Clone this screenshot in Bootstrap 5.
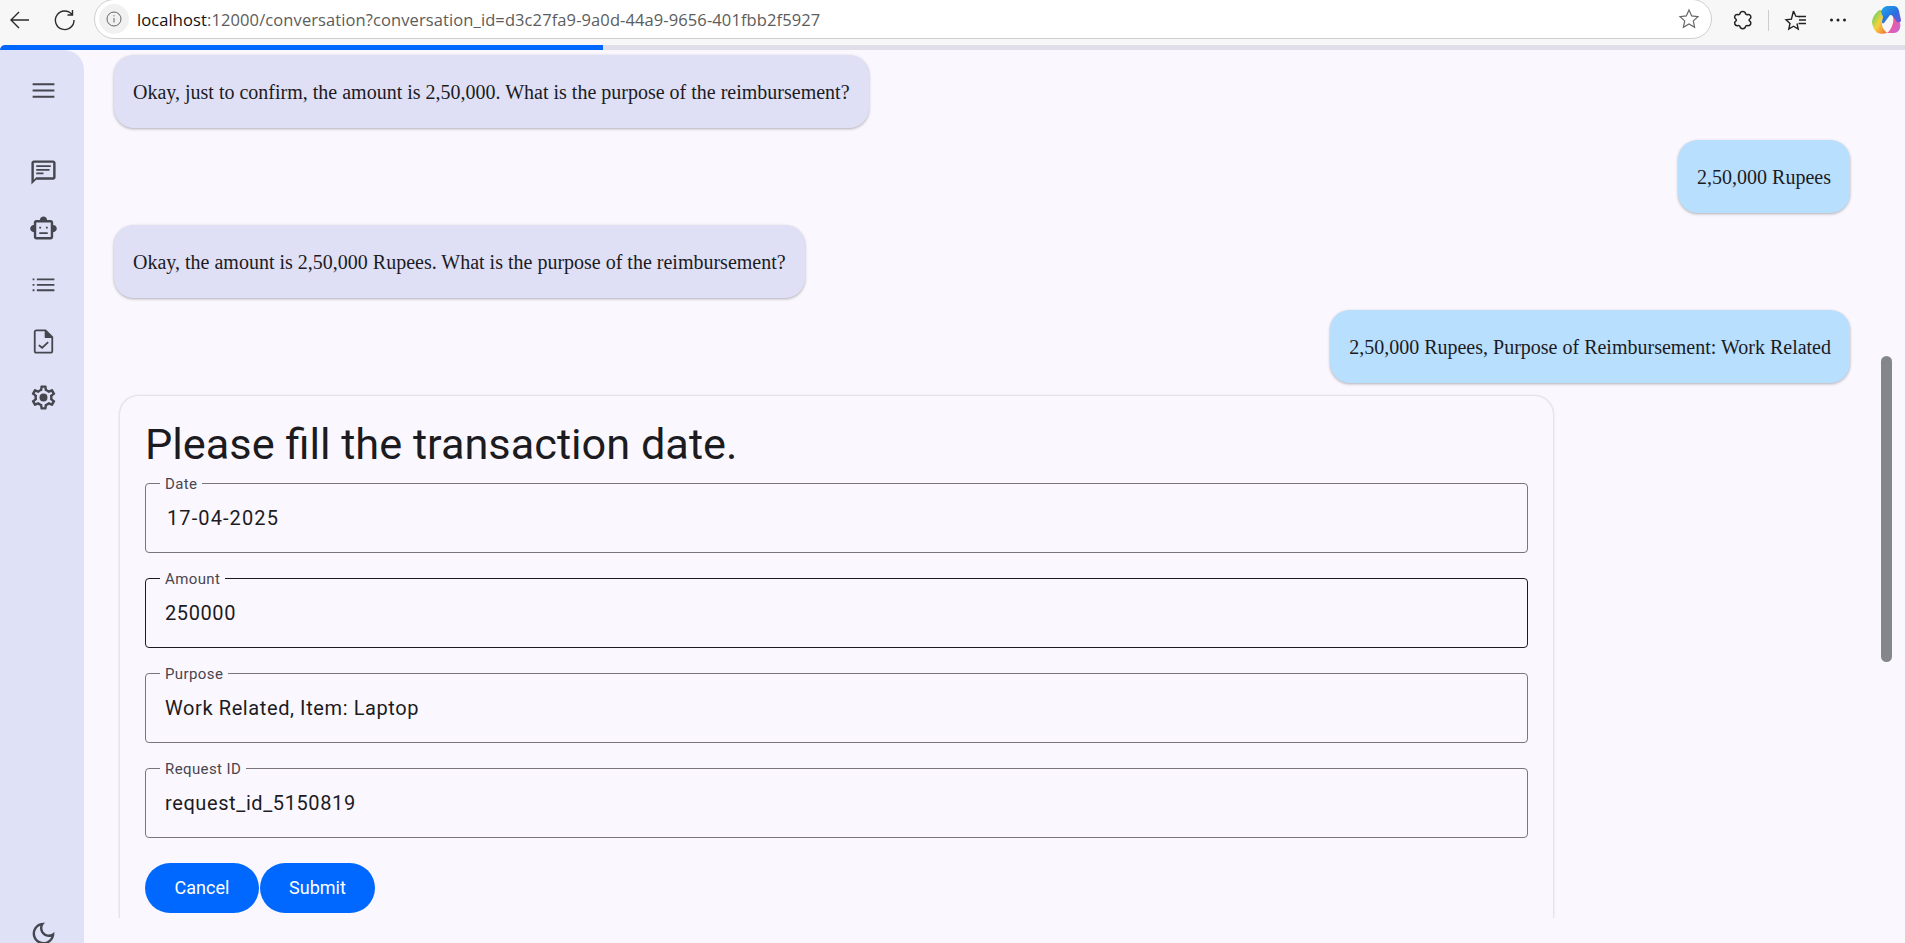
<!doctype html>
<html lang="en">
<head>
<meta charset="utf-8">
<title>Conversation</title>
<link href="https://cdn.jsdelivr.net/npm/bootstrap@5.3.0/dist/css/bootstrap.min.css" rel="stylesheet">
<style>
html,body{height:943px;overflow:hidden}
body{background:#faf8fe;font-family:Roboto,sans-serif;color:#1c1b1f}
.chrome-bar{height:45px;background:#f7f7f7}
.nav-ico{height:40px;color:#2b2b2b}
.slot-back{width:40px}
.slot-reload{width:50px}
.addr{width:1618px;height:40px;margin-top:-1px;background:#fff;border:1px solid #cfcfcf;border-radius:20px}
.addr-info{width:30px;height:30px;margin-left:4px;background:#f1f1f1;border-radius:50%;color:#666}
.addr-text{font:16.5px "Open Sans",sans-serif;color:#5c5c5c;margin-left:8px;letter-spacing:.1px;white-space:nowrap}
.addr-text b{font-weight:400;color:#111}
.addr-star{margin-right:11px}
.tools{height:40px}
.tool-puzzle{margin-left:20px}
.tool-sep{width:1px;height:21px;background:#cdcdcd;margin-left:14px}
.tool-fav{margin-left:15px}
.tool-dots{margin-left:21px}
.tool-copilot{margin-left:25px}
.progress-track{height:5px;background:#e0dfe9;border-top-left-radius:5px}
.progress-fill{width:603px;background:#0068ff;border-top-left-radius:5px}
.app-body{height:893px}
.rail{width:84px;background:#dfe1f7;border-top-right-radius:20px;color:#46464f;padding-left:3px}
.rail-ico{width:29px;height:29px;display:block;fill:currentColor}
.rail-slot{height:56.4px}
.rail-head{height:80px;margin-bottom:14px}
.rail-foot{height:24px}
.chat-pane{height:868px;padding:5px 0 0 30px}
.bubble{font:20px/23px "Liberation Serif",serif;color:#1c1b1f;padding:26px 19px 24px;border-radius:20px;box-shadow:0 1px 3px rgba(0,0,0,.3);margin-bottom:12px;width:max-content;height:73px}
.bub-agent{background:#dfe0f6}
.bub-user{background:#b8dffe;margin-left:auto}
.bubbles{width:1736px}
.form-panel{width:1435px;margin:12px 0 0 5px;background:#faf8fe;border:1px solid #e6e3ea;border-radius:20px;padding:23px 25px 30px 25px;box-shadow:0 0 2px rgba(0,0,0,.12)}
.form-heading{font:400 43.3px/52px Roboto,sans-serif;color:#1c1b1f;margin:0 0 12px}
.field-box{position:relative;height:70px;margin-bottom:25px;border:1px solid #79747e;border-radius:4px}
.field-box.focused{border-color:#1c1b1f}
.field-label{position:absolute;top:-8px;left:14px;padding:0 5px;background:#faf8fe;font:15px/16px Roboto,sans-serif;letter-spacing:.4px;color:#49454f}
.field-value{font:20px/68px Roboto,sans-serif;letter-spacing:.6px;padding-left:19px;color:#1c1b1f}
.field-value.date-val{padding-left:21px;letter-spacing:1.1px}
.btn-row{gap:1px}
.pill-btn{height:50px;width:115px;padding:0 0 2px;border-radius:25px;background:#0068ff;border:0;color:#fff;font:400 18px Roboto,sans-serif}
.pill-btn:first-child{width:114px}
.thumb{position:absolute;left:1881px;top:356px;width:11px;height:306px;border-radius:6px;background:#83878b}
</style>
</head>
<body class="d-flex flex-column">
<header class="chrome-bar d-flex align-items-start">
  <div class="d-flex align-items-center justify-content-center nav-ico slot-back">
    <svg width="22" height="22" viewBox="0 0 22 22" fill="none" stroke="currentColor" stroke-width="1.4"><path d="M20 11H2M10 3l-8 8 8 8"/></svg>
  </div>
  <div class="d-flex align-items-center justify-content-center nav-ico slot-reload">
    <svg width="24" height="24" viewBox="0 0 24 24" fill="none" stroke="currentColor" stroke-width="1.4"><path d="M19 6.5A9.3 9.3 0 1 0 21 12M19.5 2v5h-5"/></svg>
  </div>
  <div class="addr d-flex align-items-center ms-1">
    <div class="addr-info d-flex align-items-center justify-content-center">
      <svg width="16" height="16" viewBox="0 0 16 16" fill="none" stroke="currentColor"><circle cx="8" cy="8" r="7"/><path d="M8 7v4.500M8 4.200v1.200"/></svg>
    </div>
    <div class="addr-text flex-grow-1"><b>localhost</b>:12000/conversation?conversation_id=d3c27fa9-9a0d-44a9-9656-401fbb2f5927</div>
    <svg class="addr-star" width="22" height="22" viewBox="0 0 22 22" fill="none" stroke="#666" stroke-width="1.2"><path d="M11 2l2.700 5.900 6.300.7-4.700 4.300 1.300 6.300-5.600-3.200-5.600 3.200 1.300-6.300L2 8.600l6.300-.7z"/></svg>
  </div>
  <div class="tools d-flex align-items-center flex-grow-1">
    <svg class="tool-puzzle" width="22" height="22" viewBox="0 0 22 22" fill="none" stroke="#222" stroke-width="1.5"><path d="M8 4.500c.5-2.600 5-2.600 5.500 0 .3 1.200 1.500 1.300 2.500 1 2.500-.3 4 3 1.800 4.500-.9.7-.9 1.500 0 2.200 2.200 1.500.7 4.800-1.800 4.500-1-.3-2.200-.2-2.500 1-.5 2.600-5 2.600-5.500 0-.3-1.200-1.500-1.300-2.500-1-2.500.3-4-3-1.800-4.500.9-.7.9-1.500 0-2.200C1.500 8.500 3 5.200 5.500 5.500c1 .3 2.200.2 2.500-1z"/></svg>
    <div class="tool-sep"></div>
    <svg class="tool-fav" width="24" height="22" viewBox="0 0 24 22" fill="none" stroke="#222" stroke-width="1.4"><path d="M9.500 2l2.300 5.200 4.200.5M13 14.500l1.200 5.500-4.700-2.800L4.800 20 6 14.500 2 10.800l5.400-.6L9.500 2M15 7.500h7M15 11h7M14.500 14.500H22"/></svg>
    <svg class="tool-dots" width="18" height="6" viewBox="0 0 18 6" fill="#222"><circle cx="2.500" cy="3" r="1.500"/><circle cx="9" cy="3" r="1.500"/><circle cx="15.500" cy="3" r="1.500"/></svg>
    <svg class="tool-copilot" width="30" height="28" viewBox="0 0 30 28">
      <defs>
        <linearGradient id="cpA" x1="0" y1="0" x2="1" y2="1"><stop offset="0" stop-color="#1fa9e8"/><stop offset=".55" stop-color="#2a6fe0"/><stop offset="1" stop-color="#7b4fd8"/></linearGradient>
        <linearGradient id="cpB" x1="0" y1="0" x2="1" y2="1"><stop offset="0" stop-color="#3ecf6c"/><stop offset=".5" stop-color="#f5d33c"/><stop offset="1" stop-color="#f2683a"/></linearGradient>
        <linearGradient id="cpC" x1="0" y1="0" x2="1" y2="1"><stop offset="0" stop-color="#f88d4c"/><stop offset=".5" stop-color="#ee5aa0"/><stop offset="1" stop-color="#b86be8"/></linearGradient>
      </defs>
      <path fill="url(#cpB)" d="M6 5c2-2 5-1 6 2l1 3-3 7c-.5 4 2 7 5 10-3 1-7 1-9 0C3 26 1 21 0 17 0 12 3 8 6 5z"/>
      <path fill="url(#cpC)" d="M20 9c3 0 5 2 6 4 2 3 3 6 2 9-1 4-4 5-7 5h-6c3-2 5-6 6-10 .5-3 .5-5-1-8z"/>
      <path fill="url(#cpA)" d="M9 6c1-4 4-6 7-6h5c3 0 5 1 6 5l2 9c0 3-3 3-5 1l-3-5c-1-1-2-1-3-1l-6 8c-1 1-2 0-2-1l1-5z"/>
    </svg>
  </div>
</header>
<div class="progress-track d-flex"><div class="progress-fill"></div></div>
<main class="app-body d-flex position-relative">
  <nav class="rail d-flex flex-column align-items-center flex-shrink-0">
    <div class="rail-head d-flex align-items-center justify-content-center"><svg class="rail-ico" viewBox="0 0 24 24"><path d="M3 18h18v-1.600H3V18zm0-5.200h18v-1.600H3v1.600zM3 6v1.600h18V6H3z"/></svg></div>
    <div class="rail-slot d-flex align-items-center justify-content-center"><svg class="rail-ico" viewBox="0 0 24 24"><path d="M20 2H4c-1.100 0-2 .9-2 2v18l4-4h14c1.100 0 2-.9 2-2V4c0-1.100-.9-2-2-2zm0 14H6l-2 2V4h16v12zM6 12h6v1.500H6zm0-3h11v1.500H6zm0-3h12v1.500H6z"/></svg></div>
    <div class="rail-slot d-flex align-items-center justify-content-center"><svg class="rail-ico" viewBox="0 0 24 24"><path d="M20 9V7c0-1.100-.9-2-2-2h-3c0-1.660-1.340-3-3-3S9 3.340 9 5H6c-1.100 0-2 .9-2 2v2c-1.660 0-3 1.340-3 3s1.340 3 3 3v4c0 1.100.9 2 2 2h12c1.100 0 2-.9 2-2v-4c1.660 0 3-1.340 3-3s-1.340-3-3-3zm-2 10H6V7h12v12zM8.500 10.500h1.500V12H8.500zm5.500 0h1.500V12H14zM8.500 15h7v1.500h-7z"/></svg></div>
    <div class="rail-slot d-flex align-items-center justify-content-center"><svg class="rail-ico" viewBox="0 0 24 24"><path d="M3 13h1.500v-1.500H3V13zm0 4.500h1.500V16H3v1.500zm0-9h1.500V7H3v1.500zM6.500 13H21v-1.500H6.500V13zm0 4.500H21V16H6.500v1.500zm0-10.500v1.500H21V7H6.500z"/></svg></div>
    <div class="rail-slot d-flex align-items-center justify-content-center"><svg class="rail-ico" viewBox="0 0 24 24"><path d="M14 2H6c-1.100 0-1.990.9-1.990 2L4 20c0 1.100.89 2 1.990 2H18c1.100 0 2-.9 2-2V8l-6-6zm4 18.500H6a.5.5 0 0 1-.5-.5V4a.5.5 0 0 1 .5-.5h7V9h5.500v11a.5.5 0 0 1-.5.5zM8.600 14.500 7.600 15.500 10.900 18.200 16.400 13 15.400 12 10.900 16.200z"/></svg></div>
    <div class="rail-slot d-flex align-items-center justify-content-center"><svg class="rail-ico" viewBox="0 0 24 24"><path d="M19.430 12.980c.04-.32.07-.64.07-.98 0-.34-.03-.66-.07-.98l2.110-1.650c.19-.15.24-.42.12-.64l-2-3.460c-.09-.16-.26-.25-.44-.25-.06 0-.12.01-.17.03l-2.490 1c-.52-.4-1.080-.73-1.690-.98l-.38-2.650C14.460 2.180 14.250 2 14 2h-4c-.25 0-.46.18-.49.42l-.38 2.650c-.61.25-1.170.59-1.690.98l-2.490-1c-.06-.02-.12-.03-.18-.03-.17 0-.34.09-.43.25l-2 3.460c-.13.22-.07.49.12.64l2.110 1.650c-.04.32-.07.65-.07.98 0 .33.03.66.07.98l-2.110 1.650c-.19.15-.24.42-.12.64l2 3.460c.09.16.26.25.44.25.06 0 .12-.01.17-.03l2.490-1c.52.4 1.080.73 1.690.98l.38 2.650c.03.24.24.42.49.42h4c.25 0 .46-.18.49-.42l.38-2.650c.61-.25 1.170-.59 1.690-.98l2.490 1c.06.02.12.03.18.03.17 0 .34-.09.43-.25l2-3.460c.12-.22.07-.49-.12-.64l-2.110-1.650zm-1.980-1.710c.04.31.05.52.05.73 0 .21-.02.43-.05.73l-.14 1.130.89.7 1.080.84-.7 1.210-1.270-.51-1.040-.42-.9.68c-.43.32-.84.56-1.250.73l-1.060.43-.16 1.130-.2 1.350h-1.400l-.19-1.350-.16-1.130-1.060-.43c-.43-.18-.83-.41-1.230-.71l-.91-.7-1.060.43-1.270.51-.7-1.210 1.080-.84.89-.7-.14-1.130c-.03-.31-.05-.54-.05-.74s.02-.43.05-.73l.14-1.130-.89-.7-1.080-.84.7-1.210 1.270.51 1.040.42.9-.68c.43-.32.84-.56 1.250-.73l1.060-.43.16-1.130.2-1.350h1.390l.19 1.350.16 1.130 1.060.43c.43.18.83.41 1.230.71l.91.7 1.060-.43 1.270-.51.7 1.210-1.070.85-.89.7.14 1.130z"/><circle cx="12" cy="12" r="3.300"/></svg></div>
    <div class="rail-foot mt-auto d-flex justify-content-center"><svg class="rail-ico" viewBox="0 0 24 24"><path d="M9.370 5.510c-.18.64-.27 1.310-.27 1.990 0 4.080 3.320 7.400 7.400 7.400.68 0 1.350-.09 1.990-.27C17.450 17.190 14.930 19 12 19c-3.860 0-7-3.140-7-7 0-2.930 1.810-5.450 4.370-6.490zM12 3c-4.970 0-9 4.030-9 9s4.030 9 9 9 9-4.030 9-9c0-.46-.04-.92-.1-1.360-.98 1.370-2.580 2.260-4.400 2.260-2.980 0-5.400-2.420-5.400-5.400 0-1.810.89-3.420 2.260-4.400-.44-.06-.9-.1-1.360-.1z"/></svg></div>
  </nav>
  <section class="chat-pane flex-grow-1 overflow-hidden">
    <div class="bubbles">
      <div class="bubble bub-agent">Okay, just to confirm, the amount is 2,50,000. What is the purpose of the reimbursement?</div>
      <div class="bubble bub-user">2,50,000 Rupees</div>
      <div class="bubble bub-agent">Okay, the amount is 2,50,000 Rupees. What is the purpose of the reimbursement?</div>
      <div class="bubble bub-user">2,50,000 Rupees, Purpose of Reimbursement: Work Related</div>
      <div class="form-panel">
        <h1 class="form-heading">Please fill the transaction date.</h1>
        <div class="field-box"><span class="field-label">Date</span><div class="field-value date-val">17-04-2025</div></div>
        <div class="field-box focused"><span class="field-label">Amount</span><div class="field-value">250000</div></div>
        <div class="field-box"><span class="field-label">Purpose</span><div class="field-value">Work Related, Item: Laptop</div></div>
        <div class="field-box"><span class="field-label">Request ID</span><div class="field-value">request_id_5150819</div></div>
        <div class="d-flex btn-row">
          <button type="button" class="btn pill-btn">Cancel</button>
          <button type="button" class="btn pill-btn">Submit</button>
        </div>
      </div>
    </div>
  </section>
</main>
<div class="thumb"></div>
<script src="https://cdn.jsdelivr.net/npm/bootstrap@5.3.0/dist/js/bootstrap.bundle.min.js"></script>
</body>
</html>
